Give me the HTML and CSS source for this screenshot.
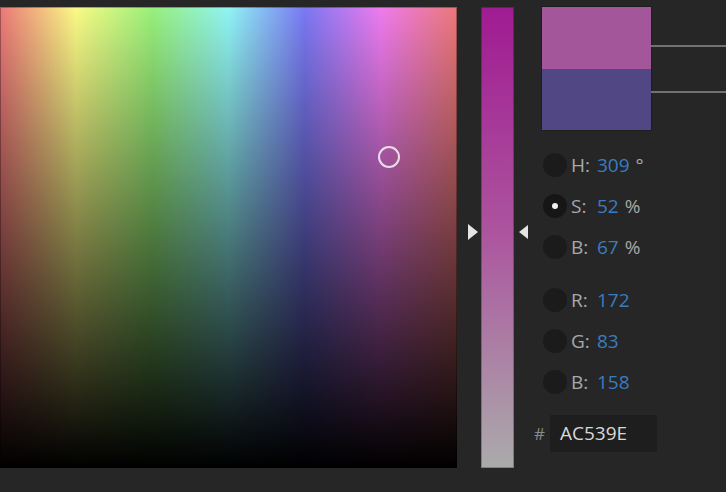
FILE: index.html
```html
<!doctype html>
<html lang="en">
<head>
    <meta charset="UTF-8">
    <title>Color Picker</title>
    <link rel="stylesheet" href="styles.css">
</head>
<body>

<div class="picker">
    <div class="field">
        <div class="marker" style="left: 378px; top: 139px;"></div>
    </div>

    <div class="slider-wrap">
        <div class="arrow arrow-right" style="top: 217px;"></div>
        <div class="slider"></div>
        <div class="arrow arrow-left" style="top: 218px;"></div>
    </div>

    <div class="panel">
        <div class="swatch-row">
            <div class="swatch">
                <div class="swatch-new"></div>
                <div class="swatch-old"></div>
            </div>
            <div class="ticks">
                <div class="tick"></div>
                <div class="tick tick-second"></div>
            </div>
        </div>

        <div class="group">
            <div class="row">
                <span class="radio"></span>
                <span class="label">H:</span>
                <span class="value">309</span>
                <span class="unit">°</span>
            </div>
            <div class="row">
                <span class="radio radio-on"></span>
                <span class="label">S:</span>
                <span class="value">52</span>
                <span class="unit">%</span>
            </div>
            <div class="row">
                <span class="radio"></span>
                <span class="label">B:</span>
                <span class="value">67</span>
                <span class="unit">%</span>
            </div>
        </div>

        <div class="group group-rgb">
            <div class="row">
                <span class="radio"></span>
                <span class="label">R:</span>
                <span class="value">172</span>
            </div>
            <div class="row">
                <span class="radio"></span>
                <span class="label">G:</span>
                <span class="value">83</span>
            </div>
            <div class="row">
                <span class="radio"></span>
                <span class="label">B:</span>
                <span class="value">158</span>
            </div>
        </div>

        <div class="hex">
            <span class="hash">#</span>
            <div class="hex-input">AC539E</div>
        </div>
    </div>
</div>

</body>
</html>
```

FILE: styles.css
```css
*{
    padding: 0;
    margin: 0;
    box-sizing: border-box;
    font-family: 'Open Sans', 'Noto Sans', sans-serif;
}

body{
    background: #262626;
    width: 726px;
    height: 492px;
    overflow: hidden;
}

.picker{
    display: flex;
    padding-top: 7px;
}

/* hue left to right, brightness top to bottom, saturation fixed */
.field{
    position: relative;
    width: 457px;
    height: 461px;
    background:
        linear-gradient(to bottom, rgba(0,0,0,0), #000),
        linear-gradient(to right,
            #ec7878 0%,
            #fafa86 16.67%,
            #98f07a 33.33%,
            #90f4f4 50%,
            #7a78f3 66.67%,
            #ee7bee 83.33%,
            #ec7878 100%);
    box-shadow: inset 0 0 0 1px rgba(0,0,0,0.3);
}
.marker{
    position: absolute;
    width: 22px;
    height: 22px;
    border: 2px solid rgba(255,255,255,0.8);
    border-radius: 50%;
}

.slider-wrap{
    position: relative;
    width: 77px;
    padding-left: 24px;
}
.slider{
    width: 33px;
    height: 461px;
    background: linear-gradient(to bottom, #a01b92 0%, #ac539e 48%, #ababab 100%);
    box-shadow: inset 0 0 0 1px rgba(0,0,0,0.25);
}
.arrow{
    position: absolute;
    width: 0;
    height: 0;
}
.arrow-right{
    left: 11px;
    border-top: 8px solid transparent;
    border-bottom: 8px solid transparent;
    border-left: 10px solid #e4e4e4;
}
.arrow-left{
    left: 62px;
    border-top: 7px solid transparent;
    border-bottom: 7px solid transparent;
    border-right: 9px solid #e4e4e4;
}

.panel{
    flex: 1;
}

.swatch-row{
    display: flex;
}
.swatch{
    margin-left: 8px;
    width: 109px;
    height: 123px;
    display: flex;
    flex-direction: column;
    box-shadow: 0 0 0 1px rgba(0,0,0,0.2);
}
.swatch-new{
    height: 62px;
    background: #a3579a;
}
.swatch-old{
    flex: 1;
    background: #514785;
}
.ticks{
    flex: 1;
    padding-top: 38px;
}
.tick{
    height: 2px;
    background: #727272;
}
.tick-second{
    margin-top: 44px;
}

.group{
    margin-top: 14px;
}
.group-rgb{
    margin-top: 12px;
}
.row{
    height: 41px;
    display: flex;
    align-items: center;
    padding-left: 9px;
    font-size: 19px;
}
.radio{
    width: 24px;
    height: 24px;
    border-radius: 50%;
    background: #1b1b1b;
    margin-right: 4px;
    display: flex;
    justify-content: center;
    align-items: center;
}
.radio-on{
    background: #161616;
}
.radio-on::after{
    content: "";
    width: 6px;
    height: 6px;
    border-radius: 50%;
    background: #f0f0f0;
}
.label{
    width: 26px;
    color: #a8a8a8;
}
.value{
    color: #3a7cc0;
}
.unit{
    color: #a8a8a8;
    margin-left: 6px;
}

.hex{
    margin-top: 13px;
    display: flex;
    align-items: center;
}
.hash{
    width: 16px;
    color: #8a8a8a;
    font-size: 17px;
}
.hex-input{
    width: 107px;
    height: 37px;
    background: #1e1e1e;
    color: #d8d8d8;
    font-size: 19px;
    line-height: 37px;
    padding-left: 10px;
}
```
